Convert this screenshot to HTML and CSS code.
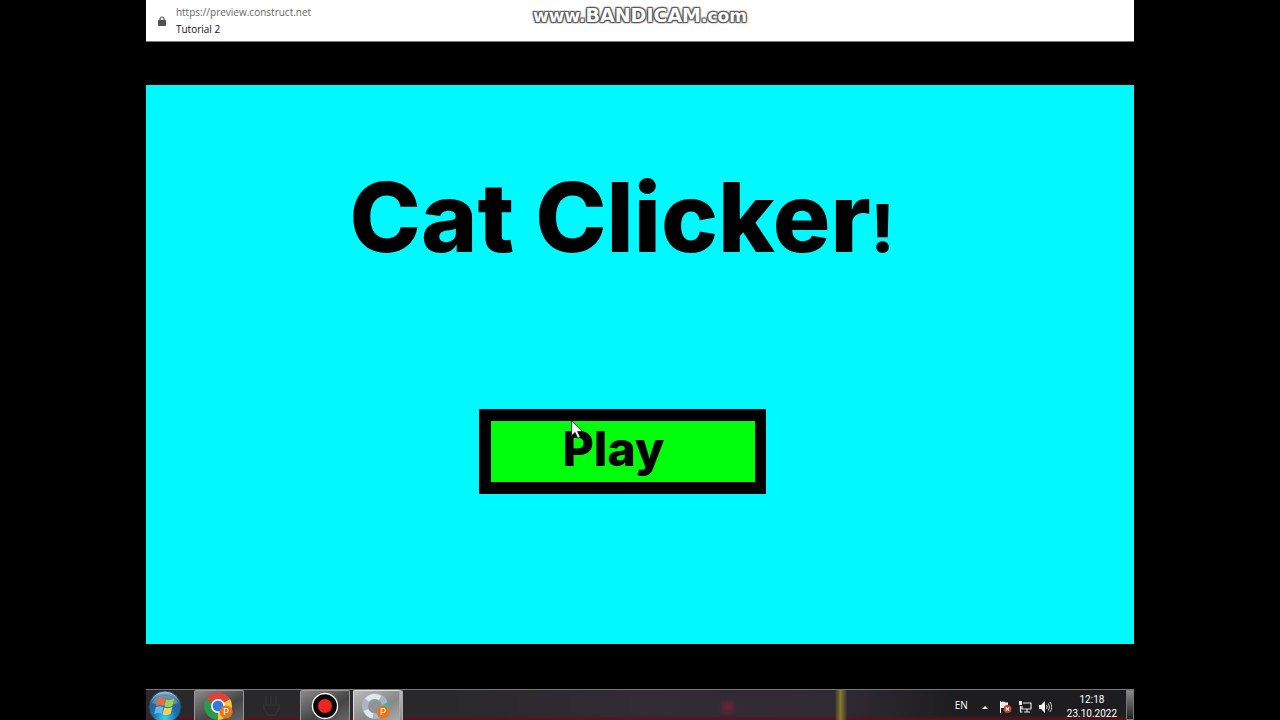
FILE: index.html
```html
<!DOCTYPE html>
<html lang="en">

<head>
    <meta charset="UTF-8">
    <meta name="viewport" content="width=device-width, initial-scale=1.0">
    <title>Tutorial 2</title>
    <link rel="stylesheet" href="styles.css">
</head>

<body>
    <div class="screen">
        <header class="topbar">
            <div class="site">
                <svg class="lock" viewBox="0 0 8 10">
                    <path d="M2 5V3a2 2 0 0 1 4 0v2" fill="none" stroke="#505050" stroke-width="1.2" />
                    <rect y="4" width="8" height="6" rx="1" fill="#505050" />
                </svg>
                <div class="site_text">
                    <p class="url">https://preview.construct.net</p>
                    <p class="page_name">Tutorial 2</p>
                </div>
            </div>
            <p class="watermark">www.<b>BANDICAM</b>.com</p>
        </header>

        <!-- game -->
        <main class="game">
            <h1 class="title">Cat Clicker<span>!</span></h1>
            <div class="play_box">
                <button class="play" type="button">Play</button>
                <svg class="cursor" viewBox="0 0 12 19">
                    <path d="M.5.5v15.2l3.6-3.3 2.6 5.8 2.5-1.1-2.6-5.6h4.9z" fill="#fff" stroke="#222" stroke-width=".8" />
                </svg>
            </div>
        </main>

        <!-- taskbar -->
        <footer class="taskbar">
            <button class="start" type="button" aria-label="Start">
                <svg viewBox="0 0 34 34">
                    <defs>
                        <radialGradient id="orb" cx=".5" cy=".85" r=".85">
                            <stop offset="0" stop-color="#35d3f5" />
                            <stop offset=".45" stop-color="#1770ac" />
                            <stop offset=".75" stop-color="#2e6289" />
                            <stop offset="1" stop-color="#b8d4e2" />
                        </radialGradient>
                    </defs>
                    <circle cx="17" cy="17" r="16" fill="url(#orb)" stroke="#1b4665" />
                    <path d="M4 13a14 11 0 0 1 26 0q-13 5-26 0z" fill="#fff" opacity=".25" />
                    <path d="M10 9q4-2 7 0l-1.500 7q-3.500-1.500-7.500 0z" fill="#ee6a35" />
                    <path d="M18 9.500q3.500 1.500 8-.5L24.500 16q-4 2-8 .5z" fill="#a3cf4b" />
                    <path d="M7.800 17q4-1.500 7.500 0L14 24q-3.500-2-7.800 0z" fill="#62b9ec" />
                    <path d="M16.300 17.500q4 1.500 8-.5L22.500 24q-4 2-7.800.5z" fill="#fbd04b" />
                </svg>
            </button>
            <button class="task" type="button" aria-label="Chrome">
                <svg viewBox="0 0 30 30">
                    <path d="M14 14 2 7A14 14 0 0 1 26.100 7z" fill="#dc4437" />
                    <path d="M14 14 26.100 7A14 14 0 0 1 14 28z" fill="#f7c83b" />
                    <path d="M14 14v14A14 14 0 0 1 2 7z" fill="#2c9a4b" />
                    <circle cx="14" cy="14" r="7" fill="#fff" />
                    <circle cx="14" cy="14" r="5.400" fill="#3377df" />
                    <circle cx="22" cy="20" r="6.500" fill="#e9751b" />
                    <text class="badge" x="22" y="23">P</text>
                </svg>
            </button>
            <button class="task ghost" type="button" aria-label="Pinned program">
                <svg viewBox="0 0 30 30">
                    <path d="M9 4v8M14 4v8M19 4v8M7 13h15v4l-4 6h-7l-4-6z" fill="none" stroke="#303032" stroke-width="2" />
                </svg>
            </button>
            <button class="task" type="button" aria-label="Bandicam">
                <svg viewBox="0 0 30 30">
                    <circle cx="15" cy="14" r="12.500" fill="#080404" stroke="#fff" stroke-width="1.300" />
                    <circle cx="15" cy="14" r="7" fill="#ee2420" />
                </svg>
            </button>
            <button class="task open" type="button" aria-label="Construct">
                <svg viewBox="0 0 30 30">
                    <circle cx="14" cy="14" r="10" fill="none" stroke="#a9b8c0" stroke-width="6" />
                    <path d="M6 8a10 10 0 0 1 13-2M5 18a10 10 0 0 0 7 6" fill="none" stroke="#dceaf4" stroke-width="5" />
                    <circle cx="14" cy="14" r="6" fill="#8c9599" />
                    <path d="m20 14 8-5v8z" fill="#45b29a" />
                    <circle cx="22" cy="20" r="6.500" fill="#e9751b" />
                    <text class="badge" x="22" y="23">P</text>
                </svg>
            </button>

            <div class="tray">
                <span class="lang">EN</span>
                <svg class="arrow" viewBox="0 0 14 14">
                    <path d="m4 9 3-3 3 3z" fill="#eee" />
                </svg>
                <svg viewBox="0 0 14 14">
                    <path d="M2.500 1v12" stroke="#fff" stroke-width="1" />
                    <path d="M3 2q3-1 4 0t3 0v6H3z" fill="#eee" />
                    <circle cx="9.500" cy="9" r="4" fill="#c93c30" />
                    <path d="m7.800 7.300 3.400 3.400m0-3.400-3.400 3.400" stroke="#fff" stroke-width="1.200" />
                </svg>
                <svg viewBox="0 0 14 14">
                    <path d="M5 3h8v6H4V6M6 12h6M9 9v3M2.500 6v6h2" fill="none" stroke="#e4e4e4" stroke-width="1.200" />
                    <path d="M1 1h3v4H1z" fill="#eee" />
                </svg>
                <svg viewBox="0 0 14 14">
                    <path d="M1 5h2l4-4v12L3 9H1z" fill="#f4f4f4" />
                    <path d="M8.500 5q1.500 2 0 4M10.300 3.500q2.500 3.500 0 7M12 2q3.500 5 0 10" fill="none" stroke="#ccc" />
                </svg>
                <div class="clock">
                    <p>12:18</p>
                    <p>23.10.2022</p>
                </div>
                <button class="desktop" type="button" aria-label="Show desktop"></button>
            </div>
        </footer>
    </div>
</body>

</html>
```

FILE: styles.css
```css
* {
    margin: 0;
    padding: 0;
    box-sizing: border-box;
}

body {
    background-color: #000;
    font-family: "Open Sans", "Noto Sans", sans-serif;
}

button {
    border: none;
    cursor: pointer;
}

.screen {
    display: flex;
    flex-direction: column;
    width: 77.2%;
    height: 100vh;
    margin: 0 auto;
    overflow: hidden;
}

/* address bar */
.topbar {
    display: grid;
    grid-template-columns: 1fr auto 1fr;
    height: 42px;
    background-color: #fff;
    border-bottom: 1px solid #777;
}

.site {
    display: flex;
    align-items: center;
    gap: 10px;
    padding-left: 12px;
}

.lock {
    width: 8px;
    height: 10px;
}

.site_text {
    padding-top: 1px;
    font-size: 10px;
    line-height: 17px;
    color: #111;
}

.url {
    color: #666;
}

.watermark {
    padding-top: 4px;
    font: bold 17px/22px "DejaVu Sans", sans-serif;
    color: #fff;
    text-shadow: 1px 1px 1px #555, -1px -1px 1px #555, 1px -1px 1px #555, -1px 1px 1px #555, 0 0 3px #777;
}

.watermark b {
    font-size: 19px;
}

/* game */
.game {
    display: flex;
    flex: 1;
    flex-direction: column;
    align-items: center;
    margin: 43px 0 45px;
    padding: 72px 36px 0 0;
    background-color: #00f8ff;
}

.title {
    font: 800 96px/120px Inter, sans-serif;
    color: #000;
}

.title span {
    font-size: 66px;
}

.play_box {
    position: relative;
    margin-top: 121px;
}

.play {
    display: block;
    width: 287px;
    height: 85px;
    padding: 0 18px 5px 0;
    border: 12px solid #000;
    border-right-width: 11px;
    background-color: #00ff0d;
    font: 800 48px/56px Inter, sans-serif;
    color: #000;
}

.cursor {
    position: absolute;
    top: 11px;
    left: 92px;
    width: 12px;
    height: 19px;
}

/* taskbar */
.taskbar {
    display: flex;
    gap: 3px;
    height: 31px;
    border-top: 1px solid #777;
    background:
        radial-gradient(circle 10px at 58.9% 17px, #702039, transparent),
        linear-gradient(90deg, transparent 69.7%, #857b2c 70.3%, transparent 71%),
        linear-gradient(transparent 80%, #50161d),
        linear-gradient(90deg, #29292b 30%, #332b36 50%, #302a35 70%, #1d1d1f 82%);
}

.start {
    width: 45px;
    background: none;
    text-align: left;
}

.start svg {
    display: block;
    width: 34px;
    height: 34px;
    margin-left: 2px;
}

.task {
    width: 50px;
    padding-top: 1px;
    border: 1px solid #999;
    border-bottom: none;
    border-radius: 2px 2px 0 0;
    background: linear-gradient(150deg, #8a8a8a, #444 60%, #666);
}

.task svg {
    display: block;
    width: 30px;
    height: 30px;
    margin: 0 auto;
}

.task.ghost {
    border-color: transparent;
    background: none;
}

.task.open {
    border-color: #ddd;
    border-right: 4px double #aaa;
    background: linear-gradient(150deg, #bbb, #888 60%, #aaa);
}

.badge {
    font: 9px Roboto, sans-serif;
    fill: #fff;
    text-anchor: middle;
}

.tray {
    display: flex;
    align-items: center;
    gap: 6px;
    margin-left: auto;
    font-size: 10px;
    color: #fff;
}

.tray svg {
    width: 14px;
    height: 14px;
    margin-top: 4px;
}

.lang {
    margin-right: 4px;
}

.clock {
    margin: 3px 3px 0 9px;
    font-family: Roboto, sans-serif;
    line-height: 14px;
    text-align: center;
}

.desktop {
    align-self: stretch;
    width: 8px;
    border: 1px solid #777;
    background: linear-gradient(#888, #222);
}
```
